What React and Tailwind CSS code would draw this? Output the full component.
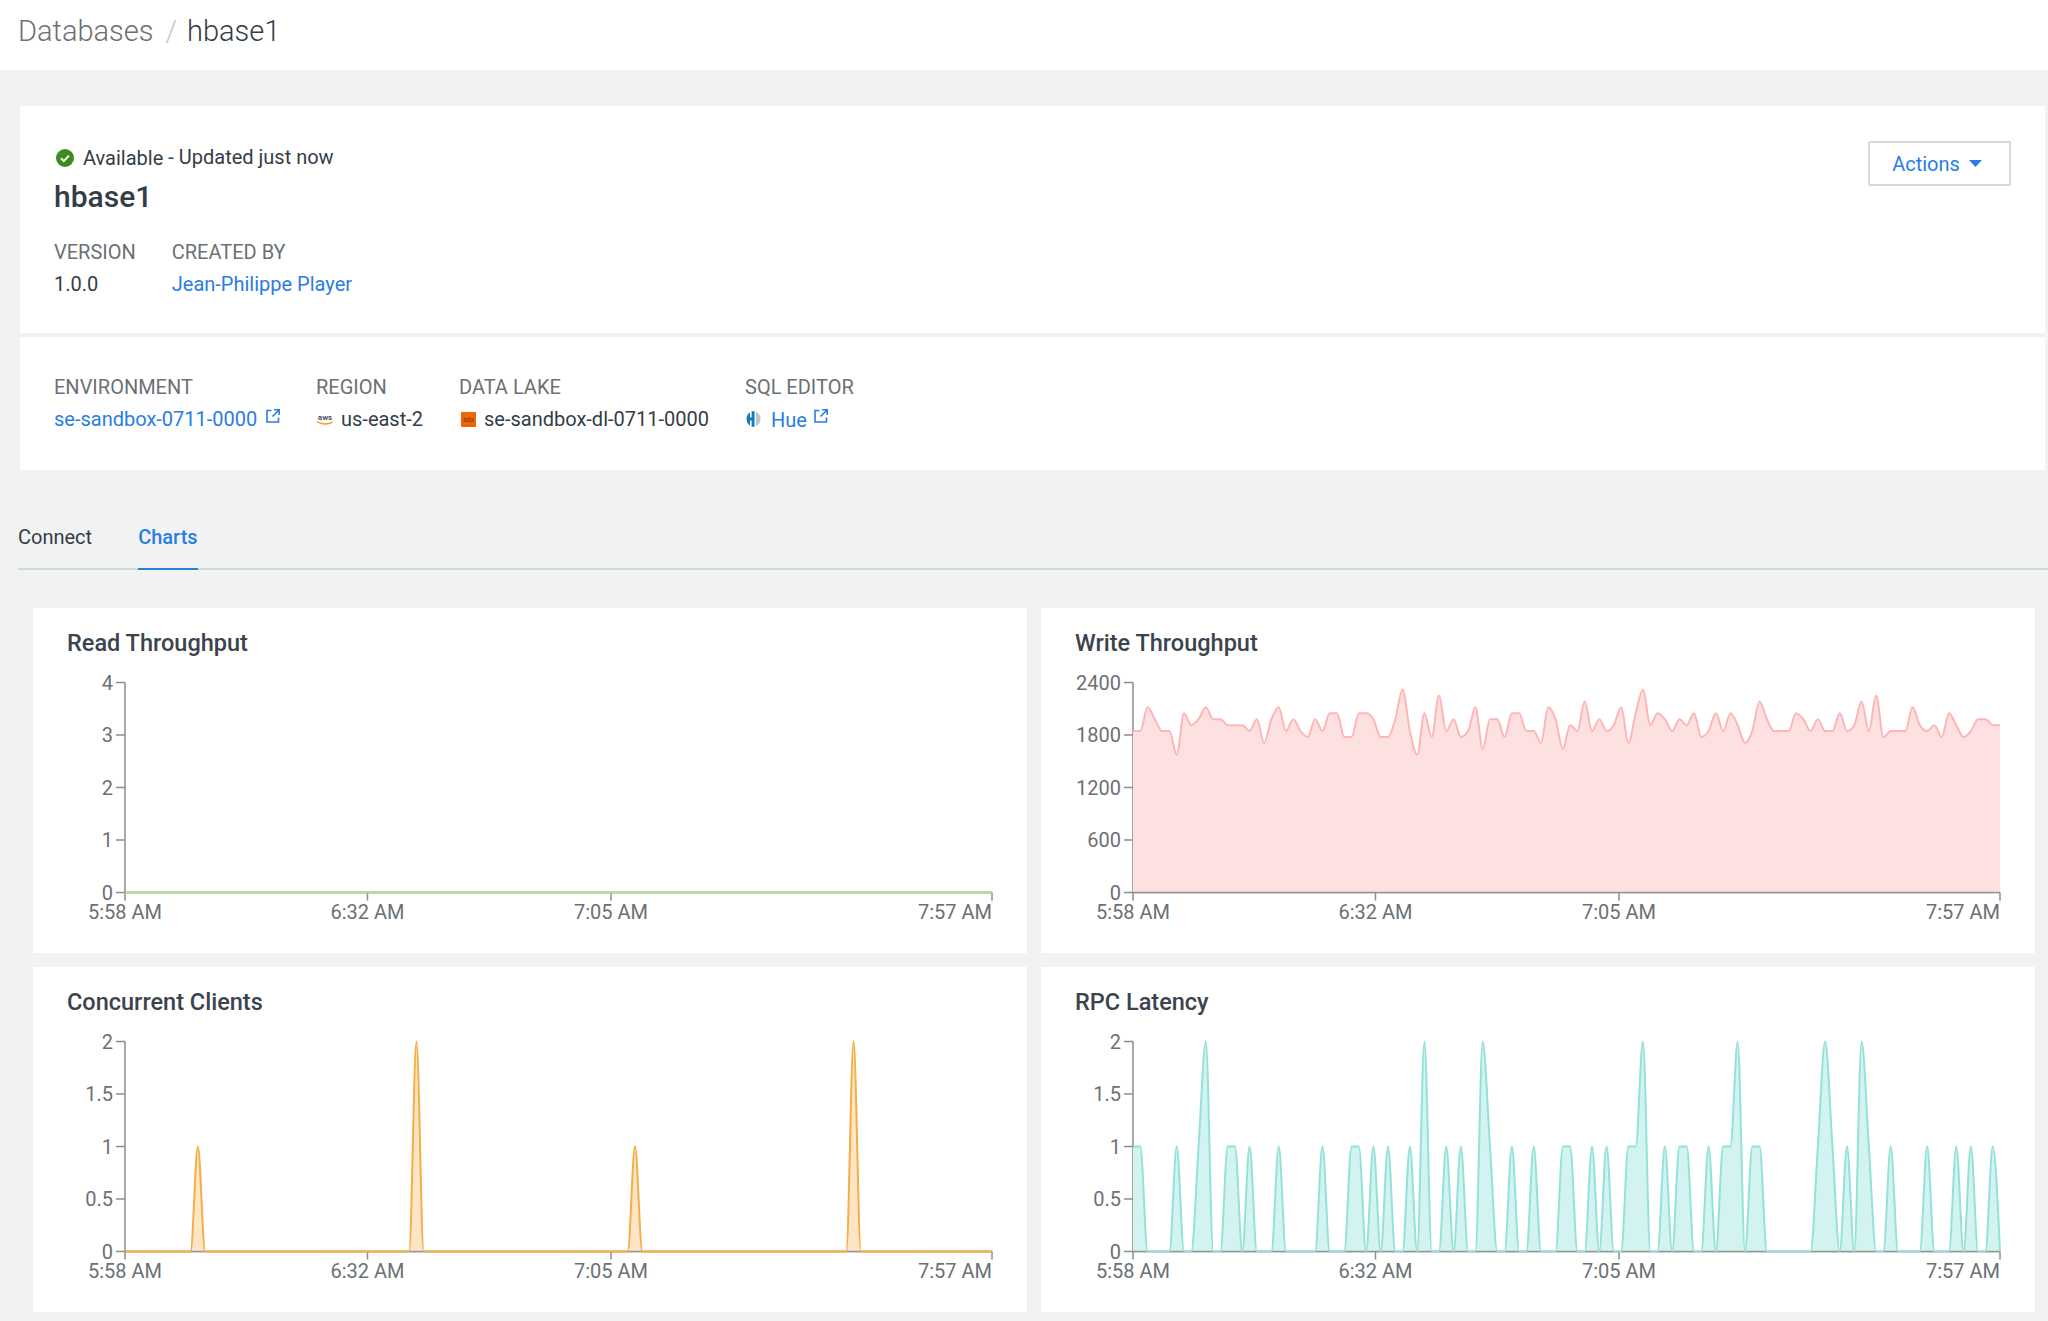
import React from "react";

const BLUE = "#2a7de1";

// levels read off the chart, one sample about every 7.3px
const writeLevels = [
  27, 27, 31, 29, 27, 27, 23, 30, 28, 29, 31, 29, 29, 28, 28, 28, 27, 29, 25, 29,
  31, 27, 29, 27, 26, 29, 27, 30, 30, 26, 26, 30, 30, 29, 26, 26, 29, 34, 27, 23,
  30, 26, 33, 27, 29, 26, 27, 31, 24, 29, 29, 26, 30, 30, 27, 27, 25, 31, 29, 24,
  28, 27, 32, 27, 29, 27, 28, 31, 25, 30, 34, 28, 30, 29, 27, 29, 28, 30, 26, 27,
  30, 27, 30, 28, 25, 27, 32, 29, 27, 27, 27, 30, 29, 27, 29, 27, 27, 30, 27, 28,
  32, 27, 33, 26, 27, 27, 27, 31, 28, 27, 28, 26, 30, 28, 26, 27, 29, 29, 28, 28,
];

function series(points) {
  const out = new Array(120).fill(0);
  Object.entries(points).forEach(([i, v]) => {
    out[i] = v;
  });
  return out;
}

const charts = [
  {
    title: "Read Throughput",
    max: 4,
    ticks: [0, 1, 2, 3, 4],
    data: new Array(120).fill(0),
    line: "#a9e28f",
    fill: "#e6f7dc",
  },
  {
    title: "Write Throughput",
    max: 2400,
    ticks: [0, 600, 1200, 1800, 2400],
    data: writeLevels.map((n) => n * 67.8 + 14),
    line: "#ffb5b5",
    fill: "#fddfdf",
  },
  {
    title: "Concurrent Clients",
    max: 2,
    ticks: [0, 0.5, 1, 1.5, 2],
    data: series({ 10: 1, 40: 2, 70: 1, 100: 2 }),
    line: "#f5ae45",
    fill: "#fde4c3",
  },
  {
    title: "RPC Latency",
    max: 2,
    ticks: [0, 0.5, 1, 1.5, 2],
    data: series({
      0: 1, 1: 1, 6: 1, 9: 1, 10: 2, 13: 1, 14: 1, 16: 1, 20: 1, 26: 1, 30: 1, 31: 1, 33: 1,
      35: 1, 38: 1, 40: 2, 43: 1, 45: 1, 48: 2, 49: 1, 52: 1, 55: 1, 59: 1, 60: 1, 63: 1, 65: 1,
      68: 1, 69: 1, 70: 2, 73: 1, 75: 1, 76: 1, 79: 1, 81: 1, 82: 1, 83: 2, 85: 1, 86: 1,
      94: 1, 95: 2, 96: 1, 98: 1, 100: 2, 101: 1, 104: 1, 109: 1, 113: 1, 115: 1, 118: 1,
    }),
    line: "#93e2d9",
    fill: "#d1f2ef",
  },
];

// same curve as d3's curveMonotoneX
function monotonePath(pts) {
  const n = pts.length;
  const t = new Array(n).fill(0);
  for (let i = 1; i < n - 1; i++) {
    const h0 = pts[i][0] - pts[i - 1][0];
    const h1 = pts[i + 1][0] - pts[i][0];
    const s0 = (pts[i][1] - pts[i - 1][1]) / h0;
    const s1 = (pts[i + 1][1] - pts[i][1]) / h1;
    const p = (s0 * h1 + s1 * h0) / (h0 + h1);
    const sign = (v) => (v < 0 ? -1 : 1);
    t[i] = (sign(s0) + sign(s1)) * Math.min(Math.abs(s0), Math.abs(s1), 0.5 * Math.abs(p)) || 0;
  }
  const h = pts[1][0] - pts[0][0];
  t[0] = (3 * (pts[1][1] - pts[0][1])) / h / 2 - t[1] / 2;
  t[n - 1] = (3 * (pts[n - 1][1] - pts[n - 2][1])) / h / 2 - t[n - 2] / 2;
  let d = `M${pts[0][0]},${pts[0][1]}`;
  for (let i = 1; i < n; i++) {
    const dx = (pts[i][0] - pts[i - 1][0]) / 3;
    d += `C${pts[i - 1][0] + dx},${pts[i - 1][1] + dx * t[i - 1]},${pts[i][0] - dx},${pts[i][1] - dx * t[i]},${pts[i][0]},${pts[i][1]}`;
  }
  return d;
}

function Chart({ title, max, ticks, data, line, fill }) {
  const left = 92;
  const right = 959;
  const top = 14.5;
  const bottom = 224.5;
  const y = (v) => bottom - (v / max) * (bottom - top);
  const step = (right - left) / (data.length - 1);
  const pts = data.map((v, i) => [left + i * step, y(v)]);
  const curve = monotonePath(pts);
  const xTicks = [
    { x: left, label: "5:58 AM", anchor: "middle" },
    { x: 334.5, label: "6:32 AM", anchor: "middle" },
    { x: 578, label: "7:05 AM", anchor: "middle" },
    { x: right, label: "7:57 AM", anchor: "end" },
  ];
  return (
    <div className="h-[345px] bg-white">
      <div className="h-[60px] pl-[34px] pt-[22px] text-[23.5px] leading-[26px] font-medium text-[#3a444e]">
        {title}
      </div>
      <svg width="994" height="285" className="block">
        <g stroke="#8c8c8c" strokeWidth="1.5" fill="none">
          <path d={`M${left},${top}V${bottom}H${right}`} />
          {ticks.map((v) => (
            <path key={v} d={`M${left - 9},${y(v)}H${left}`} />
          ))}
          {xTicks.map((t) => (
            <path key={t.label} d={`M${t.x},${bottom}V${bottom + 8}`} />
          ))}
        </g>
        <path d={`${curve}L${right},${bottom}L${left},${bottom}Z`} fill={fill} fillOpacity="0.95" />
        <path d={`M${left},${bottom}H${right}`} stroke="#8c8c8c" strokeWidth="1.5" strokeOpacity="0.8" />
        <path d={curve} fill="none" stroke={line} strokeWidth="2" />
        <g className="fill-[#6c7075] text-[20px]">
          {ticks.map((v) => (
            <text key={v} x={left - 12} y={y(v)} dy="7" textAnchor="end">
              {v}
            </text>
          ))}
          {xTicks.map((t) => (
            <text key={t.label} x={t.x} y="251" textAnchor={t.anchor}>
              {t.label}
            </text>
          ))}
        </g>
      </svg>
    </div>
  );
}

function ExternalIcon() {
  return (
    <svg width="14" height="14" viewBox="0 0 14 14" fill="none" stroke={BLUE} strokeWidth="1.6">
      <path d="M5.5 1.5H1v11.5h11.5V8.5" />
      <path d="M8 .8h5.2V6M13 1L6.5 7.5" />
    </svg>
  );
}

function StatusIcon() {
  return (
    <svg width="18" height="18" viewBox="0 0 18 18">
      <circle cx="9" cy="9" r="9" fill="#3d8a1f" />
      <path d="M5 9.3l2.8 2.8L13 6.6" fill="none" stroke="#fff" strokeWidth="2" />
    </svg>
  );
}

function AwsIcon() {
  return (
    <svg width="18" height="13" viewBox="0 0 18 13">
      <text x="9" y="7" textAnchor="middle" className="fill-[#333e48] text-[8px] font-medium">
        aws
      </text>
      <path d="M1 8.5c4.5 3.2 11 3.2 15.5 .6" fill="none" stroke="#f79a1f" strokeWidth="1.5" />
    </svg>
  );
}

function SdxIcon() {
  return (
    <svg width="15" height="15" viewBox="0 0 15 15">
      <rect width="15" height="15" rx="1" fill="#ee6503" />
      <text x="7.5" y="10" textAnchor="middle" className="fill-[#7a2e00] text-[7px]">
        sdx
      </text>
    </svg>
  );
}

function HueIcon() {
  return (
    <svg width="16" height="16" viewBox="0 0 16 16">
      <path d="M9.5 0A8 8 0 0 0 9.5 16Z" fill="#1b78b8" />
      <path d="M5 0h1.6v6.5H5zM5 9.5h1.6V16H5z" fill="#fff" />
      <path d="M11 .8A8 8 0 0 1 11 15.2Z" fill="#b9c6d2" />
    </svg>
  );
}

function Label({ children }) {
  return <div className="text-[20px] leading-[22px] text-[#6c7075]">{children}</div>;
}

export default function App() {
  return (
    <div className="min-h-[1321px] bg-[#f1f3f3] [font-family:Roboto,sans-serif] text-[#333d47]">
      <div className="flex h-[70px] items-center bg-white pb-[7px] pl-[18px] text-[29px] font-light">
        <span className="text-[#6c7075]">Databases</span>
        <span className="ml-[12px] mr-[10px] text-[#c4c8cb]">/</span>
        <span className="text-[#333d47]">hbase1</span>
      </div>

      <div className="ml-[20px] mr-[3px] mt-[36px]">
        <div className="flex h-[227px] justify-between bg-white pl-[34px] pr-[34px] pt-[39px]">
          <div>
            <div className="flex items-center text-[20px] leading-[24px]">
              <span className="ml-[2px]">
                <StatusIcon />
              </span>
              <span className="ml-[9px] mt-[1px]">Available</span>
              <span className="ml-[5px] -mt-[1px]">- Updated just now</span>
            </div>
            <div className="mt-[8px] text-[30px] leading-[38px] font-medium">hbase1</div>
            <div className="mt-[25px] flex gap-[36px]">
              <div>
                <Label>VERSION</Label>
                <div className="mt-[10px] text-[20px] leading-[22px]">1.0.0</div>
              </div>
              <div>
                <Label>CREATED BY</Label>
                <a className="mt-[10px] block text-[20px] leading-[22px] text-[#2a7de1]">
                  Jean-Philippe Player
                </a>
              </div>
            </div>
          </div>
          <button className="mt-[-4px] flex h-[45px] w-[143px] items-center justify-center gap-[9px] rounded-[2px] border-2 border-[#d5d8da] bg-white pr-[5px] text-[20px] text-[#2a7de1]">
            Actions
            <svg width="13" height="7" viewBox="0 0 13 7">
              <path d="M0 0h13L6.5 7z" fill={BLUE} />
            </svg>
          </button>
        </div>

        <div className="mt-[4px] flex h-[133px] bg-white pl-[34px] pt-[39px]">
          <div className="w-[262px]">
            <Label>ENVIRONMENT</Label>
            <div className="mt-[10px] flex items-start text-[20px] leading-[22px] text-[#2a7de1]">
              se-sandbox-0711-0000
              <span className="ml-[9px] mt-[1px]">
                <ExternalIcon />
              </span>
            </div>
          </div>
          <div className="w-[143px]">
            <Label>REGION</Label>
            <div className="mt-[10px] flex items-center gap-[7px] text-[20px] leading-[22px]">
              <AwsIcon />
              us-east-2
            </div>
          </div>
          <div className="w-[286px]">
            <Label>DATA LAKE</Label>
            <div className="mt-[10px] flex items-center gap-[8px] pl-[2px] text-[20px] leading-[22px]">
              <SdxIcon />
              se-sandbox-dl-0711-0000
            </div>
          </div>
          <div>
            <Label>SQL EDITOR</Label>
            <div className="mt-[10px] flex items-start text-[20px] leading-[22px] text-[#2a7de1]">
              <span className="mt-[3px]">
                <HueIcon />
              </span>
              <span className="ml-[10px] mt-[1px]">Hue</span>
              <span className="ml-[7px] mt-[1px]">
                <ExternalIcon />
              </span>
            </div>
          </div>
        </div>
      </div>

      <div className="ml-[18px] mt-[36px] flex gap-[46px] border-b-2 border-[#d5d8da] text-[20px]">
        <div className="flex h-[62px] items-center">Connect</div>
        <div className="-mb-[2px] flex h-[64px] items-center border-b-2 border-[#2a7de1] font-medium text-[#2a7de1]">
          Charts
        </div>
      </div>

      <div className="ml-[33px] mr-[13px] mt-[38px] grid grid-cols-2 gap-x-[14px] gap-y-[14px]">
        {charts.map((c) => (
          <Chart key={c.title} {...c} />
        ))}
      </div>
    </div>
  );
}
